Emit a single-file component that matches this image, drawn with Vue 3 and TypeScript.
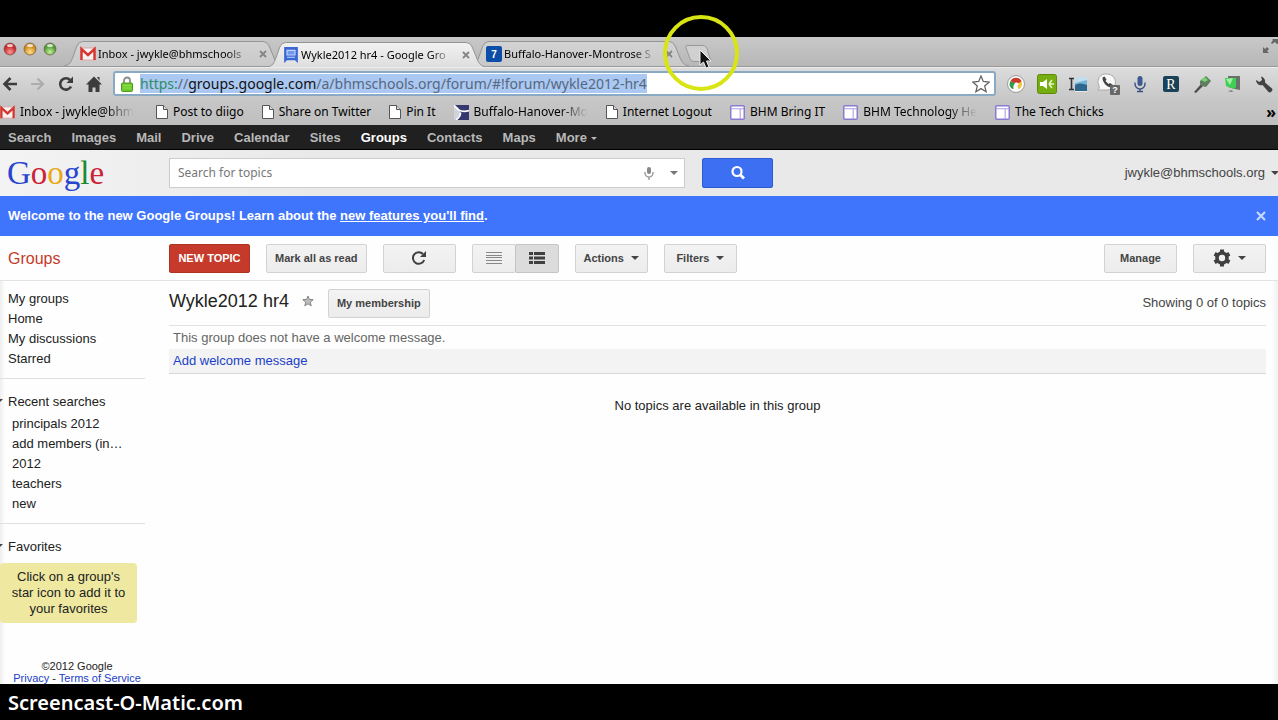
<script setup lang="ts">
import { ref } from 'vue'

interface Tab {
  title: string
  icon: 'gmail' | 'groups' | 'seven'
  active: boolean
}

interface Bookmark {
  title: string
  icon: 'gmail' | 'page' | 'swoosh' | 'frame'
  fade?: boolean
}

const tabs: Tab[] = [
  { title: 'Inbox - jwykle@bhmschools', icon: 'gmail', active: false },
  { title: 'Wykle2012 hr4 - Google Gro', icon: 'groups', active: true },
  { title: 'Buffalo-Hanover-Montrose S', icon: 'seven', active: false },
]

const bookmarks: Bookmark[] = [
  { title: 'Inbox - jwykle@bhm', icon: 'gmail', fade: true },
  { title: 'Post to diigo', icon: 'page' },
  { title: 'Share on Twitter', icon: 'page' },
  { title: 'Pin It', icon: 'page' },
  { title: 'Buffalo-Hanover-Mo', icon: 'swoosh', fade: true },
  { title: 'Internet Logout', icon: 'page' },
  { title: 'BHM Bring IT', icon: 'frame' },
  { title: 'BHM Technology He', icon: 'frame', fade: true },
  { title: 'The Tech Chicks', icon: 'frame' },
]

const products = ['Search', 'Images', 'Mail', 'Drive', 'Calendar', 'Sites', 'Groups', 'Contacts', 'Maps']
const links = ['My groups', 'Home', 'My discussions', 'Starred']
const searches = ['principals 2012', 'add members (in…', '2012', 'teachers', 'new']

const address = ref('')
const query = ref('')
</script>

<template>
  <div class="screen">
    <svg class="defs" width="0" height="0" aria-hidden="true">
      <defs>
        <symbol id="gmail" viewBox="0 0 16 14">
          <rect x="1" y="1" width="14" height="12" fill="#f6f2f2" stroke="#d9a6a4" />
          <path d="M1.5 13V2l6.500 6L14.500 2v11" fill="none" stroke="#d5362f" stroke-width="2.400" />
        </symbol>
        <symbol id="page" viewBox="0 0 12 14">
          <path d="M.5.5h7l4 4v9H.5z" fill="#fff" stroke="#555" />
          <path d="M7.500.5v4h4" fill="#ddd" stroke="#555" />
        </symbol>
        <symbol id="frame" viewBox="0 0 14 14">
          <rect x=".7" y=".7" width="12.600" height="12.600" rx="1" fill="#fff" stroke="#8b7bd0" stroke-width="1.400" />
          <path d="M1 3.500h12M9.500 4v9" fill="none" stroke="#a99ee0" />
        </symbol>
        <symbol id="swoosh" viewBox="0 0 16 16">
          <path d="M0 0h16v16H0z" fill="#34386f" />
          <path d="M0 0c3 1 6 4 7 7.500C7 11 5 14 1 16H0z" fill="#d0d2dc" />
          <path d="M0 0c4 7 9 8 16 6M7 8c0 4-2 6-5 8" fill="none" stroke="#fff" stroke-width="1.800" />
        </symbol>
        <symbol id="groups" viewBox="0 0 14 14">
          <path d="M1 0h12v14l-2.500-2.500h-7L1 14z" fill="#3b67d6" />
          <path d="M3.500 3h7v4h-7zM3.500 9h7" fill="#6f97ee" stroke="#c4d6fb" />
        </symbol>
        <symbol id="seven" viewBox="0 0 16 16">
          <rect width="16" height="16" rx="2" fill="#0c4da8" />
          <text x="8" y="12" text-anchor="middle" font-family="Liberation Sans, sans-serif" font-size="10" font-weight="700" fill="#fff">7</text>
        </symbol>
        <linearGradient id="tab-on" x2="0" y2="1"><stop offset="0" stop-color="#f2f2f2" /><stop offset="1" stop-color="#dedede" /></linearGradient>
        <linearGradient id="tab-off" x2="0" y2="1"><stop offset="0" stop-color="#d3d3d3" /><stop offset="1" stop-color="#c9c9c9" /></linearGradient>
        <radialGradient id="red" cy=".75"><stop offset="0" stop-color="#ff9a94" /><stop offset="1" stop-color="#c5272c" /></radialGradient>
        <radialGradient id="amber" cy=".75"><stop offset="0" stop-color="#ffe28a" /><stop offset="1" stop-color="#cf8b1e" /></radialGradient>
        <radialGradient id="green" cy=".75"><stop offset="0" stop-color="#c6f29a" /><stop offset="1" stop-color="#4c9c35" /></radialGradient>
      </defs>
    </svg>

    <div class="letterbox"></div>

    <header class="chrome">
      <div class="tab-strip">
        <div class="lights">
          <button v-for="c in ['red', 'amber', 'green']" :key="c" type="button" class="light" :aria-label="c">
            <svg width="14" height="14" viewBox="0 0 14 14">
              <circle cx="7" cy="7" r="6" :fill="`url(#${c})`" stroke="#6b4a42" stroke-opacity=".6" />
              <ellipse cx="7" cy="3.500" rx="3" ry="1.600" fill="#fff" opacity=".75" />
            </svg>
          </button>
        </div>
        <div v-for="tab in tabs" :key="tab.title" class="tab" :class="{ active: tab.active }">
          <svg class="tab-shape" viewBox="0 0 222 25" preserveAspectRatio="none" aria-hidden="true">
            <path d="M0 25C6 24 7 21 9 16L13 5Q15 .5 19 .5H202Q206 .5 208 5L213 17C215 22 217 24 222 25" :fill="tab.active ? 'url(#tab-on)' : 'url(#tab-off)'" stroke="#929292" />
          </svg>
          <svg class="fav"><use :href="`#${tab.icon}`" /></svg>
          <span class="tab-title">{{ tab.title }}</span>
          <button type="button" class="tab-close" aria-label="Close tab">
            <svg width="8" height="8" viewBox="0 0 8 8"><path d="M1 1l6 6M7 1L1 7" stroke="#858585" stroke-width="1.800" /></svg>
          </button>
        </div>
        <button type="button" class="new-tab" aria-label="New tab">
          <svg width="28" height="17" viewBox="0 0 28 17"><path d="M3 .5h16q3 0 4 3l3 10q1 3-2 3H10q-3 0-4-3L2 3Q1 .5 3 .5z" fill="#d0d0d0" stroke="#999" /></svg>
        </button>
        <svg class="fullscreen" width="15" height="14" viewBox="0 0 15 14" aria-hidden="true">
          <path d="M0 14V8l2 2 2-2 2 2-2 2 2 2zM15 0v5h-1l-2-2-3 2-1-1 2-3-1-1z" fill="#666" />
        </svg>
      </div>

      <div class="toolbar">
        <button type="button" class="tool" aria-label="Back"><svg width="16" height="16" viewBox="0 0 16 16"><path d="M15 8H3M8.500 2L2.500 8l6 6" fill="none" stroke="#3c3c3c" stroke-width="2.600" /></svg></button>
        <button type="button" class="tool" aria-label="Forward"><svg width="16" height="16" viewBox="0 0 16 16"><path d="M1 8h12M7.500 2.500L13 8l-5.500 5.500" fill="none" stroke="#adadad" stroke-width="2.200" /></svg></button>
        <button type="button" class="tool" aria-label="Reload"><svg width="16" height="16" viewBox="0 0 16 16"><path d="M13 10.500A5.700 5.700 0 1 1 12 4" fill="none" stroke="#3c3c3c" stroke-width="2.600" /><path d="M15 .5v6.500H8.500z" fill="#3c3c3c" /></svg></button>
        <button type="button" class="tool" aria-label="Home"><svg width="16" height="16" viewBox="0 0 16 16"><path d="M8 .5l8 8h-2.500V16H9.500v-4.500h-3V16h-4V8.500H0zM11 1h2.500v4z" fill="#3c3c3c" /></svg></button>
        <div class="omnibox">
          <svg width="12" height="16" viewBox="0 0 12 16" aria-hidden="true">
            <path d="M3 8V4.500a3 3 0 0 1 6 0V8" fill="none" stroke="#8b8b8b" stroke-width="1.800" />
            <rect x=".5" y="7" width="11" height="8.500" rx="1" fill="#6fcb2c" stroke="#4e9a22" />
            <path d="M2 9.500h8M2 12h8" stroke="#93e052" />
          </svg>
          <div class="address">
            <span class="url"><span class="scheme">https:</span>//<b>groups.google.com</b>/a/bhmschools.org/forum/#!forum/wykle2012-hr4</span>
            <input v-model="address" type="text" class="address-input" aria-label="Address" />
          </div>
          <button type="button" class="tool" aria-label="Bookmark this page"><svg width="18" height="18" viewBox="0 0 18 18"><path d="M9 1l2.300 5.500 5.900.5-4.500 3.900 1.400 5.800L9 13.600l-5.100 3.100 1.400-5.800L.8 7l5.900-.5z" fill="#fff" stroke="#666" stroke-width="1.300" /></svg></button>
        </div>
        <div class="extensions">
          <button type="button" class="tool" aria-label="Capture"><svg width="20" height="20" viewBox="0 0 20 20"><circle cx="10" cy="10" r="8.500" fill="#fafafa" stroke="#9a9a9a" /><path d="M5.500 14.500A6.300 6.300 0 0 1 4.500 7L9 9q-2 2-1.500 6z" fill="#2f9b45" /><path d="M4.500 7A6.300 6.300 0 0 1 15.500 7L14 10.500Q12 7.500 8 9z" fill="#c93a2b" /><path d="M15.500 7.500A6.300 6.300 0 0 1 12.500 15.500L11.500 12q1.500-1 1-3z" fill="#efc33c" /></svg></button>
          <button type="button" class="tool" aria-label="Sound"><svg width="20" height="20" viewBox="0 0 20 20"><rect x=".5" y=".5" width="19" height="19" rx="2" fill="#76ad10" stroke="#5b8b08" /><path d="M3 8h3l4-3v10l-4-3H3z" fill="#fff" /><path d="M12 10l3-4M12 10h5M12 10l3 4" stroke="#e8f5d0" stroke-width="1.500" /></svg></button>
          <button type="button" class="tool" aria-label="Rename image"><svg width="20" height="20" viewBox="0 0 20 20"><path d="M1 4.500h5M1 15.500h5M3.500 4v12" stroke="#333" stroke-width="1.600" /><path d="M7 3h12v13H7z" fill="#74b4d8" /><path d="M7 11q5-3 12 0v6H7z" fill="#2f668d" /><path d="M7 3h12v3L7 9z" fill="#bfdfec" /><path d="M7 17.500h12" stroke="#e8e8e8" /></svg></button>
          <button type="button" class="tool phone" aria-label="Phone"><svg width="24" height="24" viewBox="0 0 24 24"><path d="M10 2a8.500 8 0 0 1 0 16H1q2-2 1-4A8 8 0 0 1 10 2z" fill="#f8f8f8" stroke="#aaa" /><path d="M5.500 5.500l2-1 2 3-1 1.500 3 3 1.500-1 3 2-1 2c-4 2-10-5-9.500-9.500z" fill="#444" /><rect x="13" y="13" width="10" height="10" rx="1" fill="#686868" /><text x="18" y="21" text-anchor="middle" font-family="Liberation Sans, sans-serif" font-size="9" font-weight="700" fill="#fff">?</text></svg></button>
          <button type="button" class="tool" aria-label="Voice"><svg width="20" height="20" viewBox="0 0 20 20"><rect x="7.500" y="2" width="5" height="10" rx="2.500" fill="#3d5a94" /><path d="M5 8.500v1.500a5 5 0 0 0 10 0V8.500M10 15v3M7 17.500h6" fill="none" stroke="#3b5180" stroke-width="1.400" /></svg></button>
          <button type="button" class="tool" aria-label="Readability"><svg width="20" height="20" viewBox="0 0 20 20"><rect x="2" y="2" width="16" height="16" rx="2" fill="#194257" /><text x="10" y="15" text-anchor="middle" font-family="Liberation Serif, serif" font-size="14" fill="#fff">R</text></svg></button>
          <button type="button" class="tool" aria-label="Highlighter"><svg width="20" height="20" viewBox="0 0 20 20"><path d="M2 18l8-9 2 2-8 8z" fill="#4e4e4e" /><path d="M8 7l6-5 5 5-5 6-4-1-2-2z" fill="#5f7d62" /><path d="M9 6l4-3 3 3-3 2z" fill="#73d66d" /></svg></button>
          <button type="button" class="tool" aria-label="Screen"><svg width="20" height="20" viewBox="0 0 20 20"><path d="M5 2h12v14l-5-1-7-2z" fill="#6a706b" /><path d="M2 4h11v9l-2 2-8-3z" fill="#3fcf55" /><path d="M3 5l7-1-3 7z" fill="#a2efa2" /><path d="M5 17l4-1 1 2H7z" fill="#888" /></svg></button>
          <button type="button" class="tool" aria-label="Settings"><svg width="20" height="20" viewBox="0 0 20 20"><path d="M7 2.500A5 5 0 0 1 11 8.500l7 6q1 1.500-.5 3t-3 .5L8.500 11A5 5 0 0 1 2 6l3.500 2L8 6z" fill="#424242" /></svg></button>
        </div>
      </div>

      <nav class="bookmarks" aria-label="Bookmarks">
        <a v-for="b in bookmarks" :key="b.title" href="#" class="bookmark" :class="[b.icon, { fade: b.fade }]">
          <svg class="mark"><use :href="`#${b.icon}`" /></svg><span class="mark-title">{{ b.title }}</span>
        </a>
        <button type="button" class="overflow" aria-label="More bookmarks">»</button>
      </nav>
    </header>

    <nav class="products" aria-label="Products">
      <a v-for="p in products" :key="p" href="#" :class="{ current: p === 'Groups' }">{{ p }}</a>
      <a href="#" class="more">More<i class="caret"></i></a>
    </nav>

    <div class="search-row split">
      <a href="#" class="logo" aria-label="Google home"><span class="b">G</span><span class="r">o</span><span class="y">o</span><span class="b">g</span><span class="g">l</span><span class="r">e</span></a>
      <form class="search" @submit.prevent>
        <div class="search-box">
          <input v-model="query" type="text" placeholder="Search for topics" aria-label="Search for topics" />
          <button type="button" class="tool" aria-label="Search by voice"><svg width="10" height="14" viewBox="0 0 10 14"><rect x="3" y="1" width="4" height="7" rx="2" fill="#888" /><path d="M1 6v1a4 4 0 0 0 8 0V6M5 11v3" fill="none" stroke="#888" stroke-width="1.200" /></svg></button>
          <button type="button" class="tool" aria-label="Search options"><i class="caret"></i></button>
        </div>
        <button type="submit" class="go" aria-label="Search"><svg width="16" height="16" viewBox="0 0 16 16"><circle cx="7" cy="6.500" r="4.500" fill="none" stroke="#fff" stroke-width="2.200" /><path d="M10 9.500l4 4" stroke="#fff" stroke-width="2.800" /></svg></button>
        <button type="button" class="account">jwykle@bhmschools.org<i class="caret"></i></button>
      </form>
    </div>

    <div class="banner">
      <p>Welcome to the new Google Groups! Learn about the <a href="#">new features you'll find</a>.</p>
      <button type="button" class="tool" aria-label="Dismiss"><svg width="10" height="10" viewBox="0 0 10 10"><path d="M1 1l8 8M9 1L1 9" stroke="#c8dcff" stroke-width="2" /></svg></button>
    </div>

    <div class="actions split">
      <a href="#" class="brand">Groups</a>
      <div class="buttons">
        <button type="button" class="btn primary">NEW TOPIC</button>
        <button type="button" class="btn">Mark all as read</button>
        <button type="button" class="btn" aria-label="Refresh"><svg width="16" height="16" viewBox="0 0 16 16"><path d="M13.200 10A5.800 5.800 0 1 1 12 4" fill="none" stroke="#404040" stroke-width="2" /><path d="M15 1v6H9z" fill="#404040" /></svg></button>
        <div class="pair">
          <button type="button" class="btn" aria-label="Compact view"><svg width="16" height="12" viewBox="0 0 16 12"><path d="M0 .5h16M0 3.500h16M0 5.500h16M0 8.500h16M0 11.500h16" stroke="#888" /></svg></button>
          <button type="button" class="btn pressed" aria-label="List view"><svg width="16" height="12" viewBox="0 0 16 12"><path d="M0 1.500h4M5 1.500h11M0 6h4M5 6h11M0 10.500h4M5 10.500h11" stroke="#404040" stroke-width="2.800" /></svg></button>
        </div>
        <button type="button" class="btn">Actions<i class="caret"></i></button>
        <button type="button" class="btn">Filters<i class="caret"></i></button>
        <button type="button" class="btn manage">Manage</button>
        <button type="button" class="btn" aria-label="Settings"><svg width="18" height="18" viewBox="0 0 18 18"><circle cx="9" cy="9" r="5" fill="none" stroke="#404040" stroke-width="3.600" /><path d="M9 .5v3M9 14.500v3M1.600 4.800l2.600 1.500M13.800 11.700l2.600 1.500M1.600 13.200l2.600-1.500M13.800 6.300l2.600-1.500" stroke="#404040" stroke-width="4" /></svg><i class="caret"></i></button>
      </div>
    </div>

    <div class="body split">
      <aside>
        <ul class="links">
          <li v-for="l in links" :key="l"><a href="#">{{ l }}</a></li>
        </ul>
        <section>
          <h2>Recent searches</h2>
          <ul>
            <li v-for="s in searches" :key="s"><a href="#">{{ s }}</a></li>
          </ul>
        </section>
        <section class="favorites">
          <h2>Favorites</h2>
          <p class="hint">Click on a group's star icon to add it to your favorites</p>
        </section>
        <div class="legal">
          ©2012 Google<br />
          <a href="#">Privacy</a> - <a href="#">Terms of Service</a>
        </div>
      </aside>
      <main>
        <div class="title-row">
          <h1>Wykle2012 hr4</h1>
          <button type="button" class="tool" aria-label="Star this group"><svg width="12" height="12" viewBox="0 0 12 12"><path d="M6 1l1.400 3.400 3.800.3-2.900 2.400.9 3.700L6 8.800l-3.200 2 .9-3.700L.8 4.700l3.800-.3z" fill="#bbb" stroke="#858585" /></svg></button>
          <button type="button" class="btn">My membership</button>
          <span class="count">Showing 0 of 0 topics</span>
        </div>
        <p class="welcome">This group does not have a welcome message.</p>
        <div class="add"><a href="#">Add welcome message</a></div>
        <p class="empty">No topics are available in this group</p>
      </main>
    </div>

    <footer>Screencast-O-Matic.com</footer>

    <svg class="pointer" width="80" height="80" viewBox="0 0 80 80" aria-hidden="true">
      <circle cx="40" cy="40" r="36" fill="none" stroke="#d8e414" stroke-width="4" />
      <path d="M39 37v15l3.500-3 2.500 6 3-1-2.500-6H50z" fill="#111" stroke="#eee" />
    </svg>
  </div>
</template>

<style>
body {
  margin: 0;
  background: #000;
}
</style>

<style scoped>
* {
  box-sizing: border-box;
}
.screen {
  position: relative;
  display: flex;
  flex-direction: column;
  min-height: 100vh;
  overflow: hidden;
  font: 13px/20px "Liberation Sans", Arial, sans-serif;
  color: #222;
  background: #fdfefd;
}
.defs {
  position: absolute;
}
a {
  color: inherit;
  text-decoration: none;
}
p,
h1,
h2,
ul {
  margin: 0;
  padding: 0;
  list-style: none;
}
h1,
h2 {
  font-weight: 400;
}
button {
  display: flex;
  align-items: center;
  justify-content: center;
  padding: 0;
  border: 0;
  background: none;
  font: inherit;
  color: inherit;
}
svg {
  flex: none;
}
.letterbox {
  height: 37px;
  background: #000;
}
.chrome {
  font: 12px/16px "Noto Sans", "Open Sans", sans-serif;
  color: #000;
}
.tab-strip {
  display: flex;
  align-items: flex-end;
  height: 30px;
  border-bottom: 1px solid #999;
  background: linear-gradient(#c8c8c8, #b7b7b7);
}
.lights {
  display: flex;
  gap: 6px;
  width: 64px;
  padding: 0 0 10px 3px;
}
.tab {
  position: relative;
  display: flex;
  align-items: center;
  flex: 0 1 219px;
  min-width: 0;
  height: 25px;
  padding: 0 16px;
  margin-right: -16px;
}
.tab.active {
  z-index: 1;
  margin-bottom: -1px;
}
.tab-shape {
  position: absolute;
  inset: 0;
  width: 100%;
  height: 100%;
}
.fav {
  position: relative;
  width: 16px;
  height: 16px;
}
.tab-title {
  position: relative;
  flex: 1;
  margin-left: 2px;
  font-size: 11px;
  white-space: nowrap;
  mask-image: linear-gradient(90deg, #000 84%, transparent);
}
.tab-close {
  position: relative;
  margin-left: 8px;
}
.new-tab {
  margin: 0 0 4px 11px;
}
.fullscreen {
  margin: 0 0 13px auto;
}
.toolbar {
  display: flex;
  align-items: center;
  height: 34px;
  padding: 0 4px 2px 2px;
  gap: 12px;
  border-top: 1px solid #ececec;
  background: linear-gradient(#dcdcdc, #c6c6c6);
}
.omnibox {
  display: flex;
  align-items: center;
  flex: 1;
  height: 25px;
  padding: 0 4px 0 6px;
  margin-left: -1px;
  border: 2px solid #8aa9c4;
  border-radius: 3px;
  background: #fff;
}
.address {
  position: relative;
  flex: 1;
  margin-left: 7px;
  font-size: 14px;
  line-height: 19px;
  color: #56677f;
  white-space: nowrap;
}
.url {
  display: inline-block;
  background: #aac8f2;
}
.url b {
  font-weight: 400;
  color: #111;
}
.scheme {
  color: #2f8c63;
}
.address-input {
  position: absolute;
  inset: 0;
  width: 100%;
  padding: 0;
  border: 0;
  outline: 0;
  background: transparent;
  font: inherit;
}
.extensions {
  display: flex;
  align-items: center;
  gap: 11px;
  margin-left: -2px;
}
.phone {
  margin: 0 -2px;
}
.bookmarks {
  display: flex;
  align-items: center;
  height: 24px;
  padding: 0 2px 2px 0;
  gap: 18px;
  background: linear-gradient(#c6c6c6, #bfbfbf);
}
.bookmark {
  display: flex;
  align-items: center;
  gap: 5px;
  white-space: nowrap;
}
.bookmark.gmail {
  margin-right: 4px;
}
.mark {
  width: 12px;
  height: 14px;
}
.gmail .mark,
.swoosh .mark,
.frame .mark {
  width: 15px;
  height: 15px;
}
.fade .mark-title {
  mask-image: linear-gradient(90deg, #000 75%, transparent);
}
.overflow {
  margin-left: auto;
  font-size: 16px;
  font-weight: 700;
}
.products {
  display: flex;
  align-items: center;
  height: 25px;
  padding: 2px 8px 0;
  gap: 20px;
  border-bottom: 1px solid #000;
  background: #202020;
  color: #b8b8b8;
  font-weight: 700;
}
.current {
  color: #fff;
}
.caret {
  flex: none;
  width: 0;
  height: 0;
  border: 4px solid transparent;
  border-top-color: currentColor;
  border-bottom: 0;
}
.more {
  display: flex;
  align-items: center;
  gap: 4px;
}
.more .caret {
  border-width: 3px 3px 0;
}
.split {
  display: grid;
  grid-template-columns: 169px minmax(0, 1fr);
}
.search-row {
  align-items: center;
  height: 46px;
  background: linear-gradient(90deg, #f3f3f3, #e9e9e9 320px);
}
.logo {
  padding-left: 7px;
  font: 33px/38px "Liberation Serif", serif;
}
.b {
  color: #2745cf;
}
.r {
  color: #cb2237;
}
.y {
  color: #e9a917;
}
.g {
  color: #188a30;
}
.search {
  display: flex;
  align-items: center;
}
.search-box {
  display: flex;
  align-items: center;
  gap: 16px;
  flex: 0 1 516px;
  height: 30px;
  padding: 0 6px 0 8px;
  border: 1px solid #ccc;
  background: #fff;
  color: #777;
}
.search-box input {
  flex: 1;
  min-width: 0;
  padding: 0;
  border: 0;
  outline: 0;
  background: none;
  font: 12px/18px "Noto Sans", "Open Sans", sans-serif;
}
.search-box input::placeholder {
  color: #777;
  opacity: 1;
}
.go {
  width: 71px;
  height: 30px;
  margin-left: 17px;
  border: 1px solid #2f5bd0;
  border-radius: 2px;
  background: #3c6ff2;
}
.account {
  gap: 6px;
  margin-left: auto;
  margin-right: -1px;
  color: #444;
}
.banner {
  display: flex;
  align-items: center;
  justify-content: space-between;
  height: 40px;
  padding: 0 12px 0 8px;
  background: #3f74fd;
  color: #fff;
  font-weight: 700;
}
.banner a {
  text-decoration: underline;
}
.actions {
  align-items: center;
  height: 45px;
  border-bottom: 1px solid #e2e2e2;
}
.brand {
  padding: 2px 0 0 8px;
  font-size: 16px;
  color: #c63a2b;
}
.buttons {
  display: flex;
  gap: 16px;
  padding-right: 12px;
}
.btn {
  min-width: 73px;
  height: 29px;
  padding: 0 8px;
  border: 1px solid #d2d2d2;
  border-radius: 2px;
  background: linear-gradient(#f3f3f3, #ececec);
  color: #444;
  font-size: 11px;
  font-weight: 700;
  white-space: nowrap;
}
.btn .caret {
  margin-left: 7px;
}
.primary {
  min-width: 81px;
  border-color: #b03223;
  background: #c63a2b;
  color: #fff;
}
.pair {
  display: flex;
}
.pair .btn {
  min-width: 44px;
}
.pair .pressed {
  margin-left: -1px;
  background: #dcdcdc;
  border-color: #c4c4c4;
}
.manage {
  margin-left: auto;
}
.body {
  flex: 1;
  background: linear-gradient(90deg, #eee, transparent 5px, transparent calc(100% - 6px), #f0f0f0);
}
.links {
  padding: 8px 0 9px 8px;
}
aside {
  width: 145px;
}
section {
  padding: 13px 0 9px;
  border-top: 1px solid #e0e0e0;
}
h2 {
  position: relative;
  padding-left: 8px;
  font-size: 13px;
}
h2::before {
  content: "";
  position: absolute;
  left: -5px;
  top: 7px;
  border: 4px solid transparent;
  border-top-color: #444;
  border-bottom: 0;
}
section ul {
  padding: 2px 0 0 12px;
}
.favorites {
  padding-bottom: 0;
}
.hint {
  width: 137px;
  margin-top: 6px;
  padding: 6px 8px;
  border-radius: 4px;
  background: #eee8a0;
  line-height: 16px;
  text-align: center;
}
.legal {
  margin: 37px -9px 0 0;
  font-size: 11px;
  line-height: 12px;
  text-align: center;
}
.legal a,
.add a {
  color: #1a3fc8;
}
main {
  padding-right: 12px;
}
.title-row {
  display: flex;
  align-items: center;
  height: 45px;
  border-bottom: 1px solid #e2e2e2;
}
h1 {
  margin-right: 13px;
  padding-bottom: 5px;
  font-size: 18px;
}
.title-row .tool {
  margin-right: 14px;
  padding-bottom: 5px;
}
.count {
  margin-left: auto;
  color: #444;
}
.welcome,
.add {
  padding: 0 4px;
  line-height: 23px;
  color: #666;
}
.add {
  border-bottom: 1px solid #d8d8d8;
  background: #f3f3f3;
  line-height: 24px;
}
.empty {
  margin-top: 22px;
  text-align: center;
}
footer {
  height: 36px;
  padding-left: 8px;
  background: #000;
  color: #fff;
  font: 600 20px/38px "Noto Sans", "Open Sans", sans-serif;
}
.pointer {
  position: absolute;
  z-index: 2;
  left: 661px;
  top: 13px;
}
</style>
